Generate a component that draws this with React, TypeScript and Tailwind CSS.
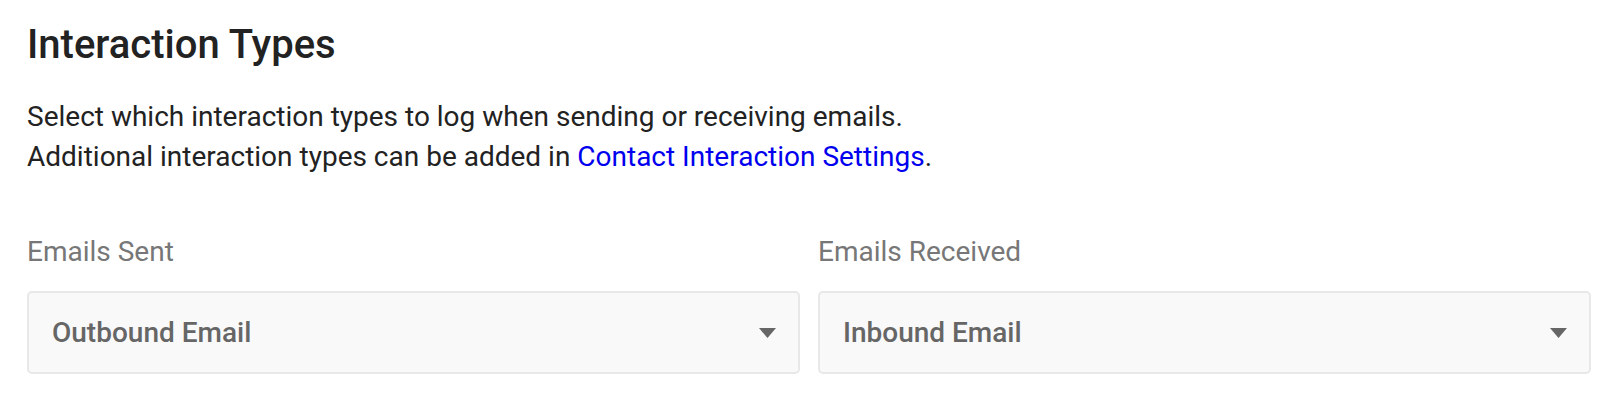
export default function App() {
  const fields = [
    { label: "Emails Sent", value: "Outbound Email" },
    { label: "Emails Received", value: "Inbound Email" },
  ];

  return (
    <div className="min-h-screen bg-white pl-[27px] pr-[29px] pt-[21px] font-['Roboto',sans-serif] text-[#222]">
      <h1 className="text-[40px] leading-[48px] font-medium">Interaction Types</h1>

      <p className="mt-[28px] text-[28px] leading-[40px]">
        Select which interaction types to log when sending or receiving emails.
        <br />
        Additional interaction types can be added in{" "}
        <a href="#" className="text-[#0000ee]">
          Contact Interaction Settings
        </a>
        .
      </p>

      <div className="mt-[59px] grid grid-cols-2 gap-[18px]">
        {fields.map((f) => (
          <div key={f.label} className="flex flex-col">
            <label className="text-[28px] leading-[32px] text-[#777]">{f.label}</label>
            <div className="mt-[23px] h-[83px] rounded-[5px] border-2 border-[#e8e8e8] bg-[#f9f9f9] pl-[23px] pr-[22px] flex items-center justify-between">
              <span className="text-[28px] font-medium text-[#666]">{f.value}</span>
              <svg width="17" height="10" viewBox="0 0 17 10" className="text-[#666]">
                <path d="M0 0h17L8.5 10z" fill="currentColor" />
              </svg>
            </div>
          </div>
        ))}
      </div>
    </div>
  );
}
